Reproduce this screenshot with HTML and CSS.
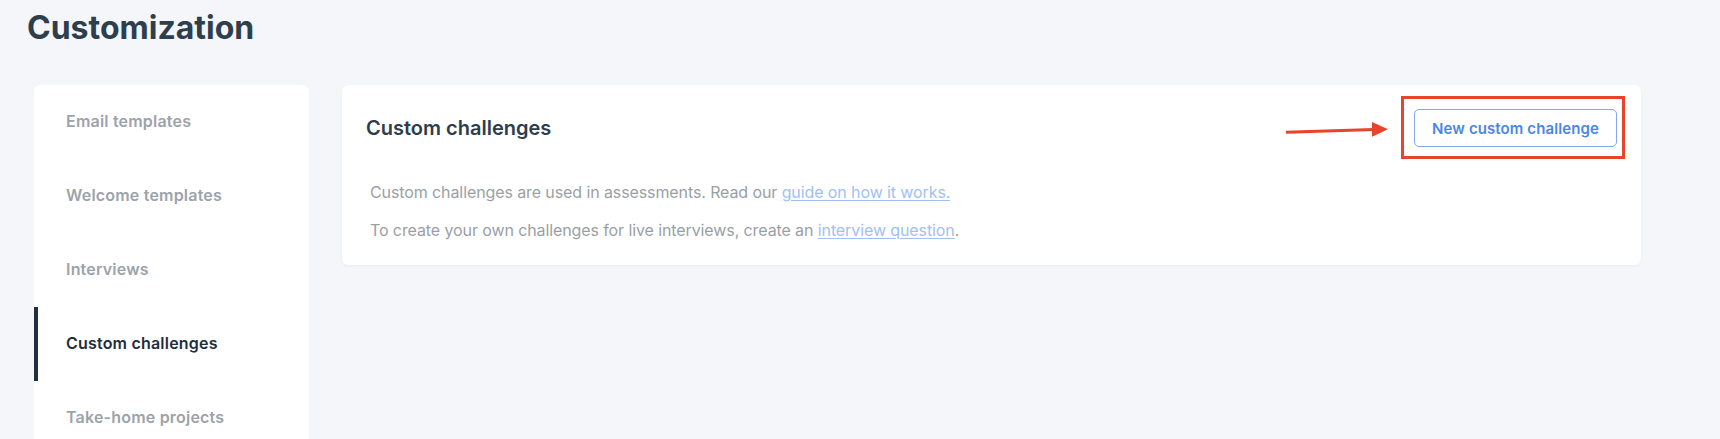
FILE: index.html
```html
<!DOCTYPE html>
<html lang="en">
<head>
<meta charset="utf-8">
<title>Customization</title>
<link rel="stylesheet" href="styles.css">
</head>
<body>
<h1 class="page-title">Customization</h1>
<div class="layout">
  <nav class="sidebar">
    <a class="nav-item">Email templates</a>
    <a class="nav-item">Welcome templates</a>
    <a class="nav-item">Interviews</a>
    <a class="nav-item nav-item--active">Custom challenges</a>
    <a class="nav-item">Take-home projects</a>
  </nav>
  <section class="card">
    <div class="card-header">
      <h2 class="card-title">Custom challenges</h2>
      <div class="btn-wrap">
        <svg class="annot-arrow" width="106" height="22" viewBox="0 0 106 22">
          <line x1="2" y1="13.2" x2="90" y2="10.6" stroke="#e8432b" stroke-width="3"/>
          <polygon points="88,3 104,10.2 88,17.8" fill="#e8432b"/>
        </svg>
        <span class="annot-box"></span>
        <button class="btn-outline">New custom challenge</button>
      </div>
    </div>
    <div class="card-body">
      <p class="text">Custom challenges are used in assessments. Read our <a class="link">guide on how it works.</a></p>
      <p class="text">To create your own challenges for live interviews, create an <a class="link">interview question</a>.</p>
    </div>
  </section>
</div>
</body>
</html>
```
FILE: styles.css
```css
html, body {
  margin: 0;
  padding: 0;
}
body {
  background: #f5f6fa;
  font-family: Inter, "Noto Sans", sans-serif;
  height: 439px;
  overflow: hidden;
}
.page-title {
  margin: 8px 0 37px 27px;
  font-size: 32px;
  line-height: 40px;
  font-weight: 700;
  color: #2d3e4c;
}
.layout {
  display: flex;
  align-items: flex-start;
  gap: 33px;
  padding: 0 79px 0 34px;
}
.sidebar {
  width: 275px;
  flex: none;
  background: #fff;
  border-radius: 6px 6px 0 0;
  display: flex;
  flex-direction: column;
}
.nav-item {
  height: 74px;
  box-sizing: border-box;
  padding-bottom: 2px;
  display: flex;
  align-items: center;
  padding-left: 32px;
  font-size: 16px;
  font-weight: 600;
  letter-spacing: 0.2px;
  color: #9ca3aa;
}
.nav-item--active {
  border-left: 4px solid #1f2f3e;
  padding-left: 28px;
  color: #1f2e3d;
}
.card {
  flex: 1;
  background: #fff;
  border-radius: 6px;
  box-shadow: 0 1px 3px rgba(40, 60, 90, 0.06);
  padding: 24px 24px 23px 24px;
}
.card-header {
  display: flex;
  align-items: center;
  justify-content: space-between;
  height: 38px;
}
.card-title {
  margin: 0;
  font-size: 20px;
  font-weight: 600;
  letter-spacing: 0;
  color: #2e3d4b;
}
.btn-wrap {
  position: relative;
  display: flex;
}
.btn-outline {
  height: 38px;
  width: 203px;
  padding: 0;
  background: #fff;
  border: 1px solid #7fa8ef;
  border-radius: 5px;
  font-family: Inter, "Noto Sans", sans-serif;
  font-size: 15px;
  font-weight: 600;
  letter-spacing: 0.1px;
  color: #4b86e6;
}
.annot-box {
  position: absolute;
  left: -13px;
  top: -13px;
  right: -8px;
  bottom: -12px;
  border: 3px solid #e8432b;
  pointer-events: none;
}
.annot-arrow {
  position: absolute;
  left: -130px;
  top: 10px;
}
.card-body {
  margin-top: 33px;
  padding-left: 4px;
  display: flex;
  flex-direction: column;
  gap: 14px;
}
.text {
  margin: 0;
  font-size: 16px;
  line-height: 24px;
  letter-spacing: -0.1px;
  color: #9a9fa6;
}
.link {
  color: #a1bff4;
  text-decoration: underline;
  text-underline-offset: 2px;
}
```
